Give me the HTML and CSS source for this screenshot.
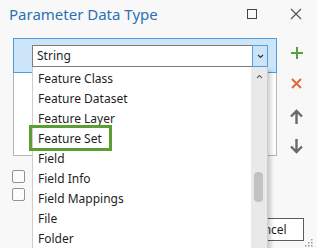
FILE: index.html
```html
<!DOCTYPE html>
<html lang="en">
<head>
    <meta charset="UTF-8">
    <meta name="viewport" content="width=device-width, initial-scale=1.0">
    <title>Parameter Data Type</title>
    <link rel="stylesheet" href="styles.css">
</head>
<body>
    <div class="dialog">
        <div class="titlebar">
            <h1 class="title">Parameter Data Type</h1>
            <span class="win-max"></span>
            <svg class="win-close" width="12" height="12" viewBox="0 0 12 12">
                <path d="M1 1 L11 11 M11 1 L1 11" stroke="#555" stroke-width="1.2" fill="none"/>
            </svg>
        </div>

        <div class="content">
            <div class="grid">
                <div class="grid-row selected">
                    <div class="combo">
                        <span class="combo-value">String</span>
                        <span class="combo-button">
                            <svg width="7" height="5" viewBox="0 0 7 5">
                                <path d="M1 1 L3.5 3.5 L6 1" stroke="#333" stroke-width="1.2" fill="none"/>
                            </svg>
                        </span>
                    </div>
                </div>
            </div>

            <div class="tools">
                <span class="tool">
                    <svg width="12" height="12" viewBox="0 0 12 12">
                        <path d="M6 0 V12 M0 6 H12" stroke="#5b9f3b" stroke-width="2" fill="none"/>
                    </svg>
                </span>
                <span class="tool">
                    <svg width="11" height="11" viewBox="0 0 11 11">
                        <path d="M1 1 L10 10 M10 1 L1 10" stroke="#dc6a3e" stroke-width="2" fill="none"/>
                    </svg>
                </span>
                <span class="tool">
                    <svg width="13" height="15" viewBox="0 0 13 15">
                        <path d="M6.5 15 V2 M1 7.5 L6.5 2 L12 7.5" stroke="#6a6a6a" stroke-width="2.4" fill="none"/>
                    </svg>
                </span>
                <span class="tool">
                    <svg width="13" height="15" viewBox="0 0 13 15">
                        <path d="M6.5 0 V13 M1 7.5 L6.5 13 L12 7.5" stroke="#6a6a6a" stroke-width="2.4" fill="none"/>
                    </svg>
                </span>
            </div>
        </div>

        <div class="options">
            <span class="checkbox"></span>
            <span class="checkbox"></span>
        </div>

        <div class="footer">
            <button class="btn">Cancel</button>
        </div>

        <svg class="grip" width="9" height="9" viewBox="0 0 9 9">
            <rect x="7" y="1" width="1.5" height="1.5" fill="#999"/>
            <rect x="4" y="4" width="1.5" height="1.5" fill="#999"/>
            <rect x="7" y="4" width="1.5" height="1.5" fill="#999"/>
            <rect x="1" y="7" width="1.5" height="1.5" fill="#999"/>
            <rect x="4" y="7" width="1.5" height="1.5" fill="#999"/>
            <rect x="7" y="7" width="1.5" height="1.5" fill="#999"/>
        </svg>

        <!-- open drop-down of the combo box -->
        <div class="dropdown">
            <ul class="dropdown-list">
                <li>Feature Class</li>
                <li>Feature Dataset</li>
                <li>Feature Layer</li>
                <li>Feature Set</li>
                <li>Field</li>
                <li>Field Info</li>
                <li>Field Mappings</li>
                <li>File</li>
                <li>Folder</li>
            </ul>
            <div class="scrollbar">
                <svg class="scroll-up" width="7" height="5" viewBox="0 0 7 5">
                    <path d="M1 4 L3.5 1.5 L6 4" stroke="#666" stroke-width="1.1" fill="none"/>
                </svg>
                <span class="scroll-thumb"></span>
            </div>
            <span class="highlight"></span>
        </div>
    </div>
</body>
</html>
```

FILE: styles.css
```css
body {
    margin: 0;
    background-color: #f8f8f8;
    font-family: 'Noto Sans', 'Open Sans', sans-serif;
    color: #1e1e1e;
    overflow: hidden;
}

.dialog {
    position: relative;
    width: 317px;
    height: 248px;
    overflow: hidden;
}

.titlebar {
    display: flex;
    align-items: flex-start;
    height: 38px;
    padding: 0 15px 0 9px;
    box-sizing: border-box;
}

.title {
    margin: 4px 0 0;
    font-size: 15px;
    font-weight: normal;
    line-height: 20px;
    color: #2b70b4;
}

.win-max {
    margin: 9px 0 0 auto;
    width: 10px;
    height: 10px;
    border: 1px solid #444;
    box-sizing: border-box;
}

.win-close {
    margin: 8px 0 0 33px;
}

.content {
    display: flex;
    padding-left: 13px;
}

.grid {
    width: 264px;
    height: 118px;
    background: white;
    border: 1px solid #b4b4b4;
    box-sizing: border-box;
}

.grid-row.selected {
    height: 35px;
    margin: -1px -1px 0 -1px;
    padding: 6px 0 0 18px;
    background: #cce5f8;
    border: 1px solid #4f9ce0;
    box-sizing: border-box;
}

.combo {
    display: flex;
    width: 236px;
    height: 22px;
    background: white;
    border: 1px solid #7d7d7d;
    box-sizing: border-box;
}

.combo-value {
    flex: 1;
    padding-left: 4px;
    font-size: 12px;
    line-height: 20px;
}

.combo-button {
    display: flex;
    align-items: center;
    justify-content: center;
    width: 14px;
    margin: -1px -1px -1px 0;
    background: #cce4f7;
    border: 1px solid #569de5;
}

.tools {
    display: flex;
    flex-direction: column;
    align-items: center;
    width: 13px;
    margin-left: 13px;
}

.tool {
    display: flex;
    align-items: center;
    justify-content: center;
    height: 30px;
}

.tool:nth-child(3) {
    padding-top: 3px;
}

.options {
    display: flex;
    flex-direction: column;
    gap: 5px;
    padding: 9px 0 0 12px;
}

.checkbox {
    width: 13px;
    height: 13px;
    background: #fcfcfc;
    border: 1px solid #929292;
    border-radius: 2px;
    box-sizing: border-box;
}

.footer {
    display: flex;
    justify-content: flex-end;
    padding: 17px 13px 0 0;
}

.btn {
    width: 72px;
    height: 23px;
    padding: 0;
    background: white;
    border: 1px solid #5c5c5c;
    font-family: inherit;
    font-size: 12px;
    color: #1e1e1e;
}

.grip {
    position: absolute;
    right: 4px;
    bottom: 1px;
}

.dropdown {
    position: absolute;
    left: 32px;
    top: 67px;
    width: 236px;
    height: 200px;
    display: flex;
    background: white;
    border: 1px solid #cdcdcd;
    border-top: none;
    box-sizing: border-box;
    box-shadow: 3px 3px 4px rgba(0, 0, 0, 0.18);
}

.dropdown-list {
    flex: 1;
    margin: 0;
    padding: 2px 0 0;
    list-style: none;
}

.dropdown-list li {
    height: 20px;
    padding-left: 5px;
    font-size: 12px;
    line-height: 20px;
}

.scrollbar {
    position: relative;
    width: 16px;
    background: #e9e9e9;
}

.scroll-up {
    display: block;
    margin: 7px auto 0;
}

.scroll-thumb {
    position: absolute;
    left: 3px;
    top: 105px;
    width: 9px;
    height: 30px;
    border-radius: 4px;
    background: #c2c2c2;
}

.highlight {
    position: absolute;
    left: -4px;
    top: 58px;
    width: 83px;
    height: 26px;
    border: 3px solid #5c9e31;
    box-sizing: border-box;
}
```
